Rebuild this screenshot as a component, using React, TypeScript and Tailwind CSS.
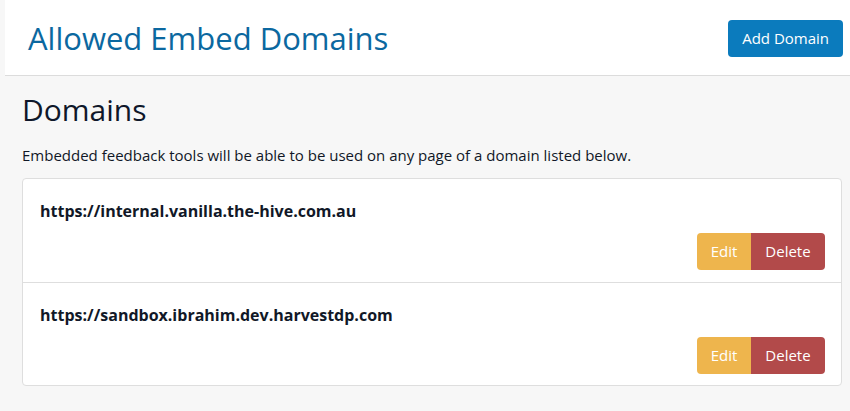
const domains = [
  "https://internal.vanilla.the-hive.com.au",
  "https://sandbox.ibrahim.dev.harvestdp.com",
];

function DomainRow({ url, last }: { url: string; last: boolean }) {
  return (
    <div className={last ? "pl-[17px] pr-[16px] pt-5 pb-[11px]" : "pl-[17px] pr-[16px] pt-5 pb-[12px] border-b border-[#dedede]"}>
      <p className="text-[16px] leading-6 font-bold text-[#111827]">{url}</p>
      <div className="flex justify-end mt-[10px]">
        <button className="h-[37px] w-[54px] bg-[#eeb54d] text-white text-[15px] rounded-l-[4px]">Edit</button>
        <button className="h-[37px] w-[74px] bg-[#b24a4a] text-white text-[15px] rounded-r-[4px]">Delete</button>
      </div>
    </div>
  );
}

export default function App() {
  return (
    <main className="min-h-[411px] bg-[#f7f7f7] font-['Open_Sans',sans-serif]">
      <header className="ml-[5px] h-[76px] bg-white border-b border-[#dcdcdc] flex items-center justify-between pl-[23px] pr-[7px] pt-[2px]">
        <h1 className="text-[31px] text-[#0b68a0]">Allowed Embed Domains</h1>
        <button className="h-[37px] px-[14px] rounded-[4px] bg-[#0b7bbd] text-white text-[15px]">Add Domain</button>
      </header>

      <section className="px-[22px] pr-[8px] pt-[16px]">
        <h2 className="text-[30px] leading-9 text-[#0f172a]">Domains</h2>
        <p className="mt-[16px] text-[15px] text-[#111827]">
          Embedded feedback tools will be able to be used on any page of a domain listed below.
        </p>
        <div className="mt-[11px] bg-white border border-[#dedede] rounded-[4px]">
          {domains.map((d, i) => (
            <DomainRow key={d} url={d} last={i === domains.length - 1} />
          ))}
        </div>
      </section>
    </main>
  );
}
